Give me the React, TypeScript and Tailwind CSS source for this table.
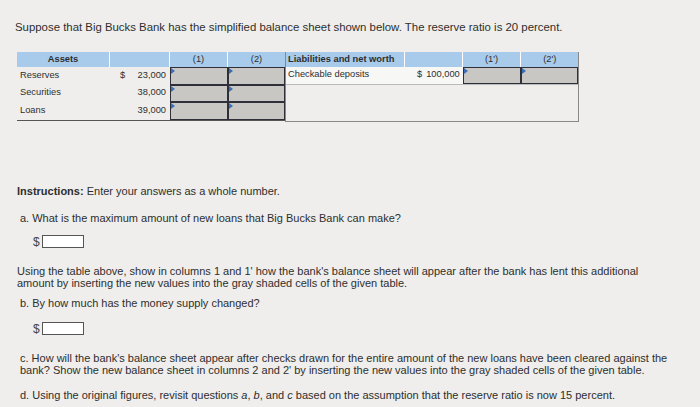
import React from 'react';

const GrayCell = ({ w }: { w: string }) => (
  <div className={`relative ${w} h-full border border-[#2f2f3a] bg-[#c9c7c4]`}>
    <span className="absolute left-0 top-0 h-0 w-0 border-l-[4px] border-t-[3px] border-b-[3px] border-l-[#3b6fb5] border-t-transparent border-b-transparent" />
  </div>
);

const AnswerBox = () => (
  <div className="flex items-center pl-[33px]">
    <span className="mr-[2px] text-[12px] text-[#444]">$</span>
    <div className="h-[13px] w-[42px] border border-[#555] bg-white" />
  </div>
);

const App = () => {
  const assets = [
    { label: 'Reserves', dollar: true, value: '23,000' },
    { label: 'Securities', dollar: false, value: '38,000' },
    { label: 'Loans', dollar: false, value: '39,000' },
  ];

  return (
    <div className="h-[407px] w-[700px] overflow-hidden bg-[#efeeec] font-['Liberation_Sans',Arial,sans-serif] text-[#2e2e2e]">
      <p className="pl-[15px] pt-[20px] text-[11.4px] leading-[14px]">
        Suppose that Big Bucks Bank has the simplified balance sheet shown below. The reserve ratio is 20 percent.
      </p>

      {/* Balance sheet */}
      <div className="mt-[18px] flex pl-[17px] text-[9.3px]">
        {/* Assets side */}
        <div className="w-[268px]">
          <div className="flex h-[15px] bg-[#a9cbeb] font-bold">
            <div className="flex w-[93px] items-center justify-center border-r border-white">Assets</div>
            <div className="w-[60px] border-r border-white" />
            <div className="flex w-[58px] items-center justify-center border-r border-white font-normal">(1)</div>
            <div className="flex w-[57px] items-center justify-center font-normal">(2)</div>
          </div>
          <div className="border-b border-[#555]">
            {assets.map((a) => (
              <div key={a.label} className="flex h-[17.5px] items-center">
                <div className="w-[93px] pl-[3px]">{a.label}</div>
                <div className="flex w-[60px] justify-between pl-[10px] pr-[4px]">
                  <span>{a.dollar ? '$' : ''}</span>
                  <span>{a.value}</span>
                </div>
                <GrayCell w="w-[58px]" />
                <GrayCell w="w-[57px]" />
              </div>
            ))}
          </div>
        </div>

        {/* Liabilities side */}
        <div className="w-[294px] border-b border-r border-l border-[#888]">
          <div className="flex h-[15px] bg-[#a9cbeb]">
            <div className="flex w-[120px] items-center border-r border-white pl-[2px] font-bold">Liabilities and net worth</div>
            <div className="w-[58px] border-r border-white" />
            <div className="flex w-[59px] items-center justify-center border-r border-white">(1')</div>
            <div className="flex w-[57px] items-center justify-center">(2')</div>
          </div>
          <div className="flex h-[17.5px] items-center border-b border-[#bbb] bg-[#f7f7f6]">
            <div className="w-[120px] pl-[2px]">Checkable deposits</div>
            <div className="flex w-[58px] justify-end gap-[4px] pr-[3px]">
              <span>$</span>
              <span>100,000</span>
            </div>
            <GrayCell w="w-[59px]" />
            <GrayCell w="w-[57px]" />
          </div>
          <div className="h-[36px]" />
        </div>
      </div>

      {/* Questions */}
      <div className="pl-[17px] pr-[18px] text-[11px] leading-[12px]">
        <p className="mt-[63px]">
          <span className="font-bold">Instructions:</span> Enter your answers as a whole number.
        </p>
        <p className="mt-[15px] pl-[3px]">a. What is the maximum amount of new loans that Big Bucks Bank can make?</p>
      </div>
      <div className="mt-[9px]">
        <AnswerBox />
      </div>
      <div className="pl-[17px] pr-[40px] text-[11px] leading-[12px]">
        <p className="mt-[14px]">
          Using the table above, show in columns 1 and 1' how the bank's balance sheet will appear after the bank has lent this additional amount by inserting the new values into the gray shaded cells of the given table.
        </p>
        <p className="mt-[8px] pl-[3px]">b. By how much has the money supply changed?</p>
      </div>
      <div className="mt-[11px]">
        <AnswerBox />
      </div>
      <div className="pl-[20px] pr-[12px] text-[11px] leading-[12px]">
        <p className="mt-[14px]">
          c. How will the bank's balance sheet appear after checks drawn for the entire amount of the new loans have been cleared against the bank? Show the new balance sheet in columns 2 and 2' by inserting the new values into the gray shaded cells of the given table.
        </p>
        <p className="mt-[13px]">
          d. Using the original figures, revisit questions <i>a</i>, <i>b</i>, and <i>c</i> based on the assumption that the reserve ratio is now 15 percent.
        </p>
      </div>
    </div>
  );
};

export default App;
